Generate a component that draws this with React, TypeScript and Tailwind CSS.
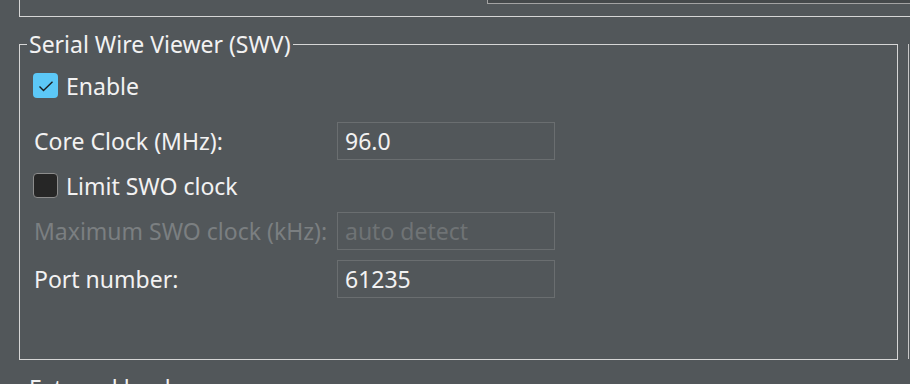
import React from "react";

const font = { fontFamily: '"Noto Sans", "Open Sans", sans-serif' };

function Checkbox({ checked }: { checked: boolean }) {
  if (checked) {
    return (
      <div className="w-[25px] h-[25px] rounded-[4px] bg-[#5cc8f7] flex items-center justify-center shrink-0">
        <svg width="25" height="25" viewBox="0 0 25 25">
          <path d="M6.5 13.5 L10.5 17.5 L19.5 8.8" fill="none" stroke="#1b1d1e" strokeWidth="1.4" />
        </svg>
      </div>
    );
  }
  return <div className="w-[25px] h-[25px] rounded-[4px] bg-[#262626] border border-[#8c8c8c] shrink-0" />;
}

function Field({ label, value, disabled }: { label: string; value: string; disabled?: boolean }) {
  return (
    <div className="flex items-center h-[38px]">
      <div className={`w-[304px] pl-[1px] ${disabled ? "text-[#7b7f81]" : "text-[#f2f2f2]"}`}>{label}</div>
      <div
        className={`w-[218px] h-[38px] border border-[#6a6e70] flex items-center pl-[7px] ${
          disabled ? "text-[#6f7375]" : "text-[#f2f2f2]"
        }`}
      >
        {value}
      </div>
    </div>
  );
}

export default function App() {
  return (
    <div
      className="w-[910px] h-[384px] bg-[#52575a] overflow-hidden text-[23px] leading-[28px] text-[#f2f2f2]"
      style={font}
    >
      {/* top group box remainder */}
      <div className="ml-[19px] h-[17px] border-l border-b border-[#d6d6d6]">
        <div className="ml-[467px] h-[4px] border-l border-b border-[#a3a3a3] bg-[#45494b]" />
      </div>

      <div className="flex mt-[13px]">
        <fieldset className="ml-[19px] w-[880px] h-[330px] border border-[#d6d6d6] px-[13px] pb-0 m-0">
          <legend className="ml-[-6px] px-[2px] leading-[28px]">Serial Wire Viewer (SWV)</legend>
          <div className="flex flex-col">
            <div className="flex items-center h-[25px] mt-[15px]">
              <Checkbox checked />
              <span className="ml-[8px]">Enable</span>
            </div>
            <div className="mt-[24px]">
              <Field label="Core Clock (MHz):" value="96.0" />
            </div>
            <div className="flex items-center h-[25px] mt-[13px]">
              <Checkbox checked={false} />
              <span className="ml-[8px]">Limit SWO clock</span>
            </div>
            <div className="mt-[14px]">
              <Field label="Maximum SWO clock (kHz):" value="auto detect" disabled />
            </div>
            <div className="mt-[10px]">
              <Field label="Port number:" value="61235" />
            </div>
          </div>
        </fieldset>
        <div className="ml-[10px] mt-[14px] h-[315px] w-[2px] border-l border-[#c8c8c8]" />
      </div>

      <div className="ml-[29px] mt-[14px]">External loader</div>
    </div>
  );
}
